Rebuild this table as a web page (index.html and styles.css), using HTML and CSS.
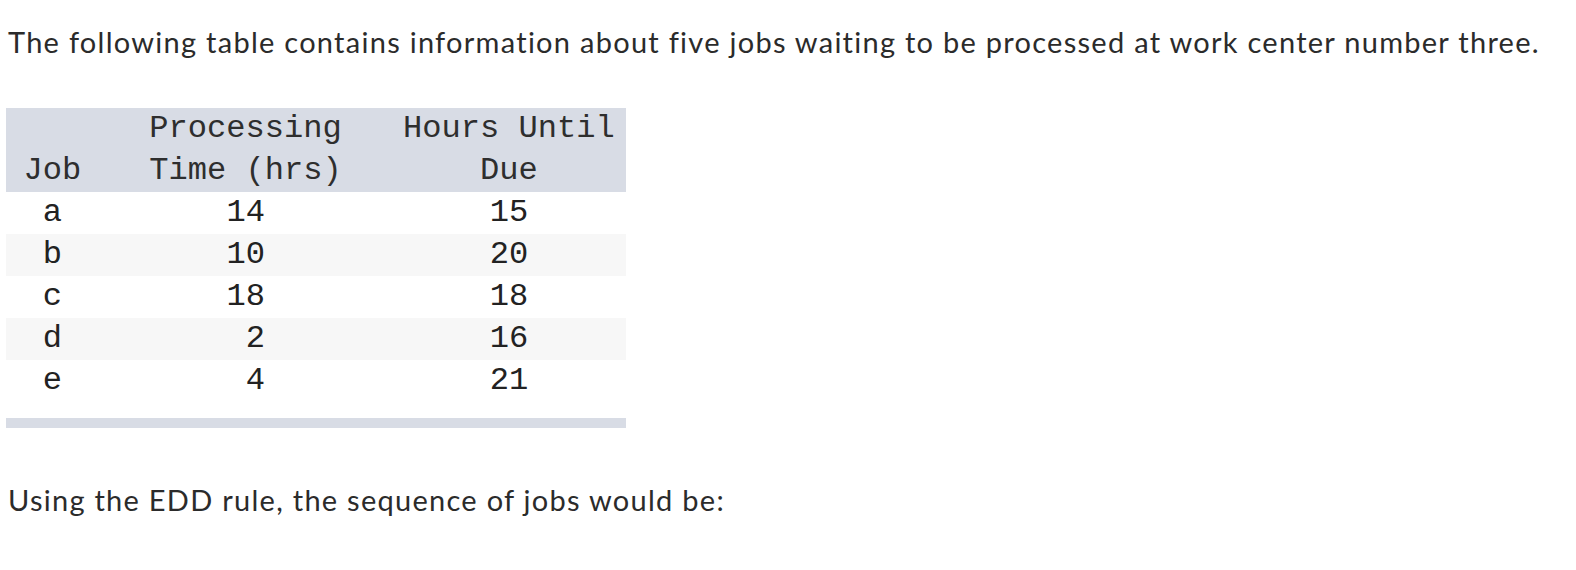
FILE: index.html
```html
<!DOCTYPE html>
<html lang="en">
<head>
<meta charset="utf-8">
<title>EDD rule</title>
<link rel="stylesheet" href="styles.css">
</head>
<body>
<p class="intro">The following table contains information about five jobs waiting to be processed at work center number three.</p>
<div class="table-wrap">
<table class="jobs">
<thead>
<tr>
<th class="c-job">Job</th>
<th class="c-proc">Processing<br>Time (hrs)</th>
<th class="c-due">Hours Until<br>Due</th>
</tr>
</thead>
<tbody>
<tr><td class="c-job">a</td><td class="c-proc">14</td><td class="c-due">15</td></tr>
<tr><td class="c-job">b</td><td class="c-proc">10</td><td class="c-due">20</td></tr>
<tr><td class="c-job">c</td><td class="c-proc">18</td><td class="c-due">18</td></tr>
<tr><td class="c-job">d</td><td class="c-proc">2</td><td class="c-due">16</td></tr>
<tr><td class="c-job">e</td><td class="c-proc">4</td><td class="c-due">21</td></tr>
</tbody>
</table>
<div class="table-foot"></div>
</div>
<p class="question">Using the EDD rule, the sequence of jobs would be:</p>
</body>
</html>
```

FILE: styles.css
```css
html, body {
  margin: 0;
  padding: 0;
  background: #ffffff;
}
body {
  padding: 0 8px;
  font-family: "Lato", "Liberation Sans", sans-serif;
  color: #2b2b2b;
  font-variant-ligatures: none;
}
.intro {
  margin: 0;
  padding-top: 22px;
  font-size: 29px;
  line-height: 40px;
  letter-spacing: 1.27px;
}
.table-wrap {
  width: 620px;
  margin: 46px 0 0 -2px;
}
.jobs {
  border-collapse: collapse;
  width: 620px;
  table-layout: fixed;
  font-family: "Liberation Mono", "Courier New", monospace;
  font-size: 32.1px;
  color: #222222;
}
.jobs th {
  font-weight: normal;
  background: #d8dce5;
  line-height: 42px;
  padding: 0;
  vertical-align: bottom;
  color: #2e2e2e;
}
.jobs td {
  line-height: 42px;
  height: 42px;
  padding: 0;
}
.jobs tbody tr:nth-child(even) td {
  background: #f7f7f7;
}
.c-job {
  width: 93px;
  text-align: center;
}
.c-proc {
  width: 293px;
  text-align: center;
}
td.c-proc {
  text-align: right;
  padding-right: 127px;
}
.c-due {
  width: 234px;
  text-align: center;
}
.table-foot {
  height: 10px;
  margin-top: 16px;
  background: #d8dce5;
}
.question {
  margin: 0;
  padding-top: 52px;
  font-size: 29px;
  line-height: 40px;
  letter-spacing: 1.27px;
}
```
